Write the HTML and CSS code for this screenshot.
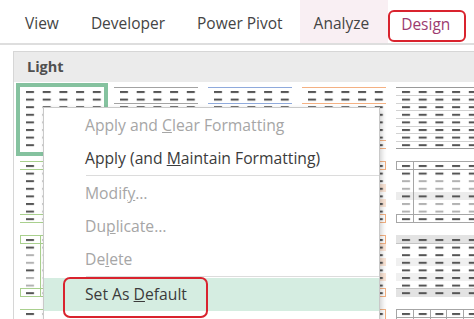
FILE: index.html
```html
<!DOCTYPE html>
<html>

<head>
    <meta charset="UTF-8">
    <title>Table Styles</title>
    <link rel="stylesheet" href="styles.css">
</head>

<body>
    <!-- shared dash patterns for the style previews -->
    <svg class="defs" width="0" height="0">
        <defs>
            <pattern id="dk" x="6" y="4" width="16.7" height="7.6" patternUnits="userSpaceOnUse">
                <rect width="8" height="2" fill="#555" />
            </pattern>
            <pattern id="lt" x="6" y="4" width="16.7" height="7.6" patternUnits="userSpaceOnUse">
                <rect width="8" height="2" fill="#b2b2b2" />
            </pattern>
        </defs>
    </svg>

    <div class="ribbon">
        <div class="tab">View</div>
        <div class="tab">Developer</div>
        <div class="tab">Power Pivot</div>
        <div class="tab tab-context">Analyze</div>
        <div class="tab tab-active">Design</div>
    </div>

    <div class="gallery">
        <div class="gallery-head">Light</div>
        <div class="tiles">
            <!-- row 1 -->
            <svg class="tile selected" width="84" height="65" viewBox="0 0 84 65">
                <rect width="84" height="61" fill="url(#dk)" />
            </svg>
            <svg class="tile" width="84" height="65" viewBox="0 0 84 65">
                <rect width="84" height="61" fill="url(#dk)" />
                <path d="M0 .5H84M0 16.5H84M0 53.5H84M0 61.5H84" stroke="#a3a3a3" />
            </svg>
            <svg class="tile" width="84" height="65" viewBox="0 0 84 65">
                <rect width="84" height="61" fill="url(#dk)" />
                <path d="M0 .5H84M0 16.5H84M0 53.5H84M0 61.5H84" stroke="#8faadc" />
            </svg>
            <svg class="tile" width="84" height="65" viewBox="0 0 84 65">
                <rect width="84" height="61" fill="url(#dk)" />
                <path d="M0 .5H84M0 16.5H84M0 53.5H84M0 61.5H84" stroke="#f4b183" />
            </svg>
            <svg class="tile" width="84" height="65" viewBox="0 0 84 65">
                <rect width="84" height="61" fill="url(#dk)" />
                <path d="M0 8.5H84M0 16.5H84M0 23.5H84M0 31.5H84M0 39.5H84M0 46.5H84M0 54.5H84" stroke="#d2d2d2" />
                <path d="M0 .5H84M0 61.5H84" stroke="#9a9a9a" />
            </svg>

            <!-- row 2 -->
            <svg class="tile" width="84" height="65" viewBox="0 0 84 65">
                <rect width="84" height="61" fill="url(#dk)" />
                <path d="M0 .5H84M0 8.5H84M0 53.5H84M0 61.5H84" stroke="#a9d08e" />
            </svg>
            <svg class="tile" width="84" height="65" viewBox="0 0 84 65">
                <rect width="84" height="61" fill="url(#dk)" />
                <path d="M0 .5H84M0 8.5H84M0 53.5H84M0 61.5H84" stroke="#a5a5a5" />
            </svg>
            <svg class="tile" width="84" height="65" viewBox="0 0 84 65">
                <rect width="84" height="61" fill="url(#dk)" />
                <rect x=".5" y=".5" width="83" height="8" fill="none" stroke="#8faadc" />
                <rect x=".5" y="53.5" width="83" height="8" fill="none" stroke="#8faadc" />
            </svg>
            <svg class="tile" width="84" height="65" viewBox="0 0 84 65">
                <rect y="23" width="84" height="8" fill="#fbe5d6" />
                <rect y="38" width="84" height="8" fill="#fbe5d6" />
                <rect width="84" height="61" fill="url(#dk)" />
                <rect x=".5" y=".5" width="83" height="8" fill="none" stroke="#f4b183" />
                <rect x=".5" y="53.5" width="83" height="8" fill="none" stroke="#f4b183" />
            </svg>
            <svg class="tile" width="84" height="65" viewBox="0 0 84 65">
                <rect y="31" width="84" height="8" fill="#ececec" />
                <rect width="84" height="16" fill="url(#dk)" />
                <rect y="16" width="84" height="15" fill="url(#lt)" />
                <rect y="31" width="84" height="8" fill="url(#dk)" />
                <rect y="39" width="84" height="15" fill="url(#lt)" />
                <rect y="54" width="84" height="8" fill="url(#dk)" />
                <rect x=".5" y=".5" width="83" height="8" fill="none" stroke="#a6a6a6" />
                <rect x=".5" y="53.5" width="83" height="8" fill="none" stroke="#a6a6a6" />
                <path d="M17.5 0V62" stroke="#a6a6a6" />
            </svg>

            <!-- row 3 -->
            <svg class="tile" width="84" height="65" viewBox="0 0 84 65">
                <rect width="84" height="16" fill="url(#dk)" />
                <rect y="16" width="84" height="15" fill="url(#lt)" />
                <rect y="31" width="84" height="8" fill="url(#dk)" />
                <rect y="39" width="84" height="15" fill="url(#lt)" />
                <rect y="54" width="84" height="8" fill="url(#dk)" />
                <rect x=".5" y=".5" width="83" height="8" fill="none" stroke="#a9d08e" />
                <rect x=".5" y="53.5" width="83" height="8" fill="none" stroke="#a9d08e" />
                <path d="M20.5 0V62" stroke="#a9d08e" />
            </svg>
            <svg class="tile" width="84" height="65" viewBox="0 0 84 65">
                <rect width="84" height="61" fill="url(#dk)" />
                <rect x=".5" y=".5" width="83" height="8" fill="none" stroke="#a5a5a5" />
                <rect x=".5" y="53.5" width="83" height="8" fill="none" stroke="#a5a5a5" />
            </svg>
            <svg class="tile" width="84" height="65" viewBox="0 0 84 65">
                <rect width="84" height="61" fill="url(#dk)" />
                <rect x=".5" y=".5" width="83" height="8" fill="none" stroke="#8faadc" />
                <rect x=".5" y="53.5" width="83" height="8" fill="none" stroke="#8faadc" />
            </svg>
            <svg class="tile" width="84" height="65" viewBox="0 0 84 65">
                <rect y="8" width="84" height="8" fill="#fbe5d6" />
                <rect y="23" width="84" height="8" fill="#fbe5d6" />
                <rect y="38" width="84" height="8" fill="#fbe5d6" />
                <rect width="84" height="61" fill="url(#dk)" />
                <rect x=".5" y=".5" width="83" height="8" fill="none" stroke="#f4b183" />
                <rect x=".5" y="53.5" width="83" height="8" fill="none" stroke="#f4b183" />
            </svg>
            <svg class="tile" width="84" height="65" viewBox="0 0 84 65">
                <rect width="84" height="8" fill="#e3e3e3" />
                <rect y="54" width="84" height="8" fill="#e3e3e3" />
                <rect y="23" width="84" height="8" fill="#f0f0f0" />
                <rect y="38" width="84" height="8" fill="#f0f0f0" />
                <rect width="84" height="61" fill="url(#dk)" />
                <path d="M0 8.5H84M0 53.5H84" stroke="#c4c4c4" />
            </svg>

            <!-- row 4 -->
            <svg class="tile" width="84" height="65" viewBox="0 0 84 65">
                <rect width="84" height="61" fill="url(#dk)" />
                <path d="M0 .5H84" stroke="#a9d08e" />
            </svg>
            <svg class="tile" width="84" height="65" viewBox="0 0 84 65">
                <rect width="84" height="61" fill="url(#dk)" />
                <path d="M0 .5H84" stroke="#a5a5a5" />
            </svg>
            <svg class="tile" width="84" height="65" viewBox="0 0 84 65">
                <rect width="84" height="61" fill="url(#dk)" />
                <path d="M0 .5H84" stroke="#8faadc" />
            </svg>
            <svg class="tile" width="84" height="65" viewBox="0 0 84 65">
                <rect width="84" height="61" fill="url(#dk)" />
                <rect x=".5" y=".5" width="83" height="60" fill="none" stroke="#f4b183" />
            </svg>
            <svg class="tile" width="84" height="65" viewBox="0 0 84 65">
                <rect width="84" height="61" fill="url(#dk)" />
                <rect x=".5" y=".5" width="83" height="60" fill="none" stroke="#a6a6a6" />
                <path d="M17.5 0V61M34.5 0V61M50.5 0V61M67.5 0V61M0 8.5H84" stroke="#a6a6a6" />
            </svg>
        </div>

        <div class="menu">
            <div class="item disabled">Apply and <u>C</u>lear Formatting</div>
            <div class="item">Apply (and <u>M</u>aintain Formatting)</div>
            <div class="sep"></div>
            <div class="item disabled">Modif<u>y</u>…</div>
            <div class="item disabled">Du<u>p</u>licate…</div>
            <div class="item disabled">De<u>l</u>ete</div>
            <div class="sep"></div>
            <div class="item hover"><span class="callout">Set As <u>D</u>efault</span></div>
        </div>
    </div>
</body>

</html>
```

FILE: styles.css
```css
/* Excel table styles gallery with its context menu */
body {
    margin: 0;
    padding: 0;
    width: 474px;
    height: 319px;
    overflow: hidden;
    background-color: #fff;
    font-family: "Open Sans", "Noto Sans", sans-serif;
}

.defs {
    display: block;
}

.ribbon {
    display: flex;
    height: 43px;
    padding-left: 10px;
    border-bottom: 2px solid #dedede;
}

.tab {
    display: flex;
    align-items: center;
    padding: 3px 15px 0 15px;
    margin-right: 2px;
    font-size: 15.5px;
    color: #444;
}

.tab-context {
    background-color: #f9eff3;
    padding: 3px 19px 0 14px;
    margin-right: 0;
}

.tab-active {
    box-sizing: border-box;
    align-self: flex-start;
    height: 32px;
    margin-top: 10px;
    padding: 0 14px 5px 11px;
    border: 2px solid #d9232e;
    border-radius: 6px;
    color: #9c3b6f;
}

.gallery {
    position: relative;
    height: 267px;
    overflow: hidden;
    margin: 6px 0 0 13px;
    border-top: 1px solid #d6d6d6;
    border-left: 1px solid #d6d6d6;
}

.gallery-head {
    height: 30px;
    line-height: 30px;
    padding-left: 13px;
    background-color: #ebebeb;
    font-size: 14.5px;
    font-weight: bold;
    color: #505050;
}

.tiles {
    display: grid;
    grid-template-columns: repeat(5, 84px);
    column-gap: 10px;
    row-gap: 9px;
    padding: 5px 0 0 6px;
}

.tile {
    display: block;
}

.tile.selected {
    outline: 4px solid #85c29f;
}

.menu {
    position: absolute;
    left: 29px;
    top: 55px;
    box-sizing: border-box;
    width: 337px;
    height: 240px;
    padding-top: 1px;
    background-color: #fff;
    border: 1px solid #c9c9c9;
    box-shadow: 2px 2px 5px rgba(0, 0, 0, 0.18);
}

.menu .item {
    line-height: 33px;
    padding-left: 41px;
    font-size: 15.7px;
    color: #3b3b3b;
}

.menu .item.disabled {
    color: #a6a6a6;
}

.menu .item.hover {
    background-color: #d5ede1;
}

.menu .sep {
    height: 1px;
    margin: 0 0 1px 42px;
    background-color: #dcdcdc;
}

.callout {
    position: relative;
}

.callout::after {
    content: "";
    position: absolute;
    left: -22px;
    right: -21px;
    top: -6px;
    bottom: -13px;
    border: 2px solid #d9232e;
    border-radius: 7px;
}
```
